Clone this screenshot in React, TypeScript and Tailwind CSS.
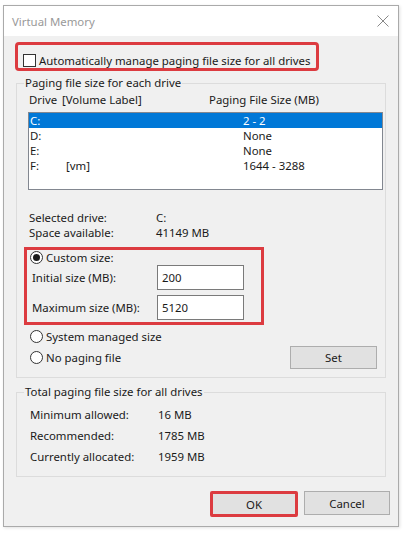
import React from 'react';

const font = { fontFamily: '"Noto Sans", "Open Sans", sans-serif' };

function Radio({ checked }: { checked?: boolean }) {
  return (
    <span className="flex h-[13px] w-[13px] shrink-0 items-center justify-center rounded-full border border-[#333] bg-white">
      {checked && <span className="h-[7px] w-[7px] rounded-full bg-[#1a1a1a]" />}
    </span>
  );
}

function Button({ label, className = '' }: { label: string; className?: string }) {
  return (
    <div className={`flex items-center justify-center border border-[#adadad] bg-[#e1e1e1] text-[#1a1a1a] ${className}`}>
      {label}
    </div>
  );
}

const drives = [
  { drive: 'C:', label: '', size: '2 - 2' },
  { drive: 'D:', label: '', size: 'None' },
  { drive: 'E:', label: '', size: 'None' },
  { drive: 'F:', label: '[vm]', size: '1644 - 3288' },
];

export default function App() {
  return (
    <div className="min-h-[536px] bg-white pl-[3px] pt-[5px] text-[11.4px] leading-[15px] text-[#1a1a1a]" style={font}>
      <div className="flex h-[522px] w-[396px] flex-col border border-[#aaaaaa] shadow-[1px_1px_3px_rgba(0,0,0,0.12)]">
        {/* Title bar */}
        <div className="flex h-[30px] items-center justify-between bg-white pl-[8px] pr-[8px]">
          <span className="text-[#999]">Virtual Memory</span>
          <svg width="12" height="12" viewBox="0 0 12 12" className="mr-[1px]">
            <path d="M0.5 0.5L11.5 11.5M11.5 0.5L0.5 11.5" stroke="#888" strokeWidth="1" />
          </svg>
        </div>

        {/* Body */}
        <div className="flex flex-1 flex-col bg-[#f0f0f0] pt-[6px]">
          <div className="ml-[11px] flex h-[29px] w-[304px] items-start rounded-[4px] border-[3px] border-[#dc3b40] pl-[5px] pt-[9px]">
            <span className="h-[13px] w-[13px] shrink-0 border border-[#333] bg-white" />
            <span className="ml-[3px] mt-[-1px] whitespace-nowrap">Automatically manage paging file size for all drives</span>
          </div>

          <fieldset className="ml-[12px] mt-[4px] w-[370px] border border-[#dcdcdc] pb-[8px] pl-[7px]">
            <legend className="px-[1px] leading-[16px]">Paging file size for each drive</legend>
            <div className="mt-[1px] flex h-[15px] items-center pl-[5px]">
              <span className="w-[33px]">Drive</span>
              <span className="w-[147px]">[Volume Label]</span>
              <span>Paging File Size (MB)</span>
            </div>
            <div className="ml-[4px] mt-[5px] h-[78px] w-[355px] border border-[#828790] bg-white">
              {drives.map((d, i) => (
                <div
                  key={d.drive}
                  className={`flex h-[15px] items-center pl-[1px] ${i === 0 ? 'bg-[#0078d7] text-white' : ''}`}
                >
                  <span className="w-[36px]">{d.drive}</span>
                  <span className="w-[177px]">{d.label}</span>
                  <span>{d.size}</span>
                </div>
              ))}
            </div>

            <div className="ml-[5px] mt-[20px] flex h-[15px] items-center">
              <span className="w-[127px]">Selected drive:</span>
              <span>C:</span>
            </div>
            <div className="ml-[5px] flex h-[15px] items-center">
              <span className="w-[127px]">Space available:</span>
              <span>41149 MB</span>
            </div>

            <div className="mt-[7px] h-[78px] w-[240px] border-[3px] border-[#dc3b40]">
              <div className="flex h-[15px] items-center pl-[3px]">
                <Radio checked />
                <span className="ml-[3px]">Custom size:</span>
              </div>
              <div className="flex h-[25px] items-center">
                <span className="w-[130px] pl-[5px]">Initial size (MB):</span>
                <div className="h-[25px] w-[87px] border border-[#7a7a7a] bg-white pl-[4px] pt-[4px]">200</div>
              </div>
              <div className="mt-[5px] flex h-[25px] items-center">
                <span className="w-[130px] pl-[5px]">Maximum size (MB):</span>
                <div className="h-[25px] w-[87px] border border-[#7a7a7a] bg-white pl-[4px] pt-[4px]">5120</div>
              </div>
            </div>

            <div className="ml-[6px] mt-[4px] flex h-[15px] items-center">
              <Radio />
              <span className="ml-[3px]">System managed size</span>
            </div>
            <div className="mt-[2px] flex h-[23px] w-[353px] items-center justify-between">
              <div className="ml-[6px] flex items-center">
                <Radio />
                <span className="ml-[3px]">No paging file</span>
              </div>
              <Button label="Set" className="h-[23px] w-[87px]" />
            </div>
          </fieldset>

          <fieldset className="ml-[12px] mt-[6px] w-[370px] border border-[#dcdcdc] pb-[9px] pl-[7px]">
            <legend className="px-[1px] leading-[16px]">Total paging file size for all drives</legend>
            <div className="ml-[6px] mt-[4px]">
              {[
                ['Minimum allowed:', '16 MB'],
                ['Recommended:', '1785 MB'],
                ['Currently allocated:', '1959 MB'],
              ].map(([k, v]) => (
                <div key={k} className="flex h-[21px] items-center">
                  <span className="w-[128px]">{k}</span>
                  <span>{v}</span>
                </div>
              ))}
            </div>
          </fieldset>

          <div className="mt-[14px] flex justify-end gap-[6px] pr-[8px]">
            <div className="h-[26px] w-[88px] rounded-[2px] border-[3px] border-[#dc3b40] bg-[#e1e1e1]">
              <div className="flex h-full items-center justify-center">OK</div>
            </div>
            <Button label="Cancel" className="h-[24px] w-[86px]" />
          </div>
        </div>
      </div>
    </div>
  );
}
